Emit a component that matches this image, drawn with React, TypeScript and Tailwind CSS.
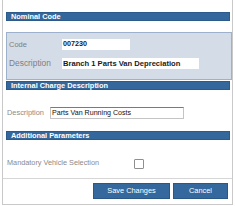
export default function App() {
  return (
    <div
      className="h-[206px] w-[235px] bg-white"
      style={{ fontFamily: '"Liberation Sans", Arial, sans-serif' }}
    >
      <div className="ml-[2px] flex h-[205px] w-[231px] flex-col border-x border-b border-[#c9c9c9] pt-[12px]">
        <div className="pl-[3px] pr-[2px]">
          <SectionBar title="Nominal Code" />
        </div>

        <div className="mt-[11px] pl-[3px]">
          <div className="flex h-[48px] flex-col gap-[8px] border border-[#9db0cc] bg-[#d4dce8] pt-[6px] pl-[2px]">
            <div className="flex h-[11px] items-center">
              <span className="w-[53px] text-[7.5px] text-[#7f7f7f]">Code</span>
              <div className="flex h-[11px] w-[68px] items-center bg-white pl-[1px] text-[7.2px] font-bold text-[#1a1a1a]">
                007230
              </div>
            </div>
            <div className="flex h-[11px] items-center">
              <span className="w-[53px] text-[8.4px] text-[#7f7f7f]">Description</span>
              <div className="flex h-[11px] w-[137px] items-center bg-white pl-[1px] text-[7.6px] font-bold text-[#1a1a1a]">
                Branch 1 Parts Van Depreciation
              </div>
            </div>
          </div>
        </div>

        <div className="mt-[1px] pl-[3px] pr-[2px]">
          <SectionBar title="Internal Charge Description" />
        </div>

        <div className="mt-[17px] flex h-[12px] items-center pl-[4px]">
          <span className="w-[43px] text-[7.4px] text-[#8a8a8a]">Description</span>
          <div className="flex h-[12px] w-[134px] items-center border border-[#c4c4c4] border-t-[#7a7a7a] bg-white pl-[1px] text-[7.1px] text-[#111]">
            Parts Van Running Costs
          </div>
        </div>

        <div className="mt-[12px] pl-[3px] pr-[2px]">
          <SectionBar title="Additional Parameters" />
        </div>

        <div className="mt-[18px] flex h-[11px] items-center pl-[4px]">
          <span className="w-[127px] text-[7.3px] text-[#8a8a8a]">Mandatory Vehicle Selection</span>
          <div className="h-[10px] w-[10px] rounded-[1px] border border-[#8f8f8f] bg-white" />
        </div>

        <div className="mt-[9px] border-t border-[#d6d6d6]" />

        <div className="mt-[4px] flex justify-end gap-[3px] pr-[4px]">
          <button className="flex h-[16px] w-[77px] items-center justify-center border border-[#2a5787] bg-[#35689c] text-[7.4px] text-white">
            Save Changes
          </button>
          <button className="flex h-[16px] w-[55px] items-center justify-center border border-[#2a5787] bg-[#35689c] text-[7.4px] text-white">
            Cancel
          </button>
        </div>
      </div>
    </div>
  );
}

function SectionBar({ title }: { title: string }) {
  return (
    <div className="flex h-[9px] items-center border border-[#2c5a8a] bg-[#34679b] pl-[4px] text-[7.4px] font-bold leading-none text-white">
      {title}
    </div>
  );
}
